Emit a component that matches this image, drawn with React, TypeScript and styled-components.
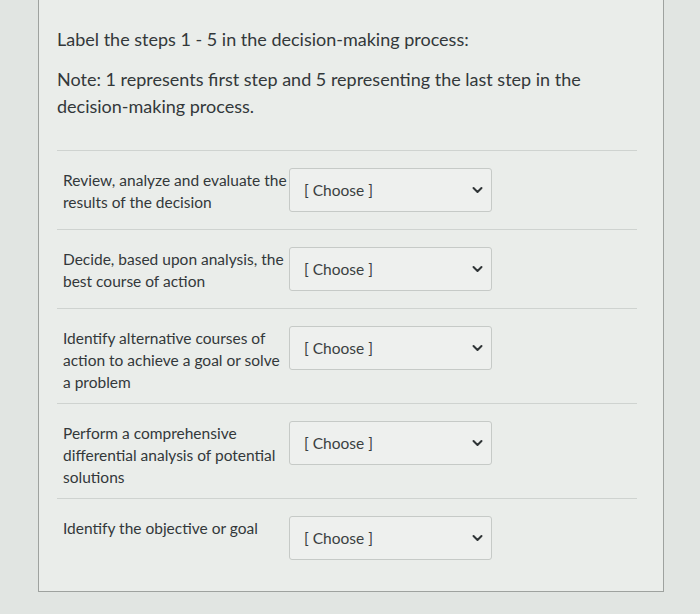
import React from "react";
import styled, { createGlobalStyle } from "styled-components";

const Global = createGlobalStyle`
  html, body { margin: 0; padding: 0; background: #e1e5e2; }
  body { font-family: Lato, "Open Sans", sans-serif; color: #33383a; }
`;

const Page = styled.div`
  width: 700px;
  height: 614px;
  overflow: hidden;
  padding: 0 36px 0 38px;
  box-sizing: border-box;
`;

const Card = styled.div`
  background: #eaedea;
  border: 1px solid #9ea29f;
  border-top: none;
  padding: 26px 26px 24px 18px;
`;

const Title = styled.p`
  margin: 0;
  font-size: 18px;
  line-height: 27px;
`;

const Note = styled.p`
  margin: 13px 0 0;
  font-size: 18px;
  line-height: 27px;
`;

const Rows = styled.div`
  margin-top: 30px;
  border-top: 1px solid #cfd3d0;
`;

const Row = styled.div<{ $last?: boolean }>`
  display: flex;
  align-items: flex-start;
  padding: 17px 0 ${(p) => (p.$last ? "0" : "10px")} 6px;
  border-bottom: ${(p) => (p.$last ? "none" : "1px solid #cfd3d0")};
`;

const Label = styled.div`
  width: 226px;
  flex: none;
  font-size: 15.5px;
  line-height: 22px;
  padding-top: 1px;
`;

const Select = styled.div`
  display: flex;
  align-items: center;
  justify-content: space-between;
  width: 203px;
  height: 44px;
  margin-bottom: 7px;
  box-sizing: border-box;
  padding: 0 8px 0 14px;
  border: 1px solid #c6cac7;
  border-radius: 3px;
  background: #eef0ee;
  font-size: 15.5px;
  color: #3a3f41;
`;

const Chevron = () => (
  <svg width="11" height="8" viewBox="0 0 11 8">
    <path d="M1.5 2 L5.5 6 L9.5 2" fill="none" stroke="#2f3436" strokeWidth="2" strokeLinecap="round" strokeLinejoin="round" />
  </svg>
);

const items = [
  "Review, analyze and evaluate the results of the decision",
  "Decide, based upon analysis, the best course of action",
  "Identify alternative courses of action to achieve a goal or solve a problem",
  "Perform a comprehensive differential analysis of potential solutions",
  "Identify the objective or goal",
];

export default function App() {
  return (
    <>
      <Global />
      <Page>
        <Card>
          <Title>Label the steps 1 - 5 in the decision-making process:</Title>
          <Note>
            Note: 1 represents first step and 5 representing the last step in the decision-making process.
          </Note>
          <Rows>
            {items.map((t, i) => (
              <Row key={i} $last={i === items.length - 1}>
                <Label>{t}</Label>
                <Select>
                  <span>[ Choose ]</span>
                  <Chevron />
                </Select>
              </Row>
            ))}
          </Rows>
        </Card>
      </Page>
    </>
  );
}
